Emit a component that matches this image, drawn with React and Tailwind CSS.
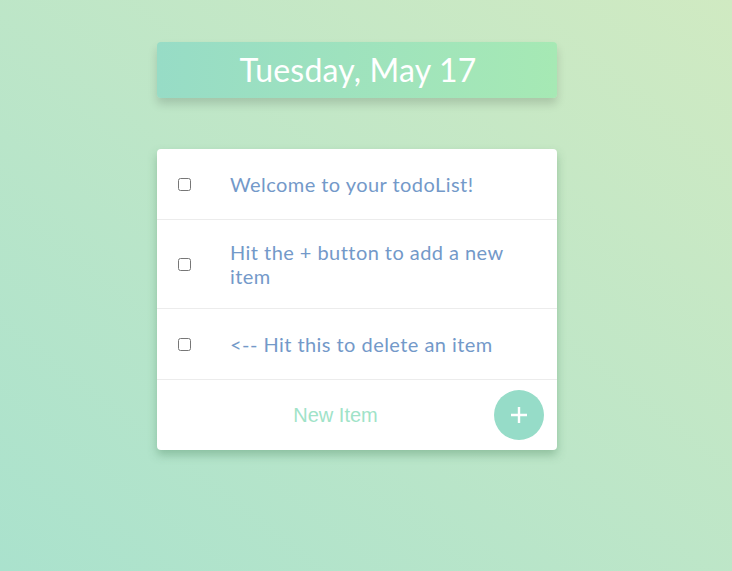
export default function App() {
  const items = [
    { text: "Welcome to your todoList!", h: "h-[71px]" },
    { text: "Hit the + button to add a new item", h: "h-[89px]" },
    { text: "<-- Hit this to delete an item", h: "h-[71px]" },
  ];
  return (
    <div className="min-h-screen w-full bg-linear-to-bl from-[#d0eac2] to-[#aae2cd] pt-[42px] pb-[60px]" style={{ fontFamily: "Lato, 'Noto Sans', sans-serif" }}>
      <div className="ml-[157px] w-[400px] h-[56px] rounded-[4px] bg-linear-to-r from-[#97dcc6] to-[#a6e9b4] shadow-[0_6px_10px_rgba(0,0,0,0.15)] flex items-center justify-center">
        <h1 className="text-white text-[32px] leading-none tracking-[0.2px] pl-[2px]">Tuesday, May 17</h1>
      </div>
      <div className="ml-[157px] mt-[51px] w-[400px] rounded-[4px] bg-white shadow-[0_5px_10px_rgba(60,120,80,0.35)] overflow-hidden">
        {items.map((it, i) => (
          <div key={i} className={`${it.h} flex items-center border-b border-[#ececec]`}>
            <div className="w-[73px] shrink-0 pl-[21px] flex items-center pt-[1px]">
              <input type="checkbox" className="w-[13px] h-[13px] m-0" />
            </div>
            <p className="w-[290px] text-[20px] leading-[24px] tracking-[0.45px] text-[#7399c9] pb-[1px]">{it.text}</p>
          </div>
        ))}
        <div className="h-[70px] flex items-center">
          <input
            type="text"
            placeholder="New Item"
            className="flex-1 min-w-0 pl-[20px] text-center text-[20px] outline-none placeholder:text-[#a0e3c8] bg-transparent"
            style={{ fontFamily: "'Liberation Sans', Arial, sans-serif" }}
          />
          <button className="w-[50px] h-[50px] mr-[13px] rounded-full bg-[#96dcc8] flex items-center justify-center shrink-0">
            <svg width="18" height="18" viewBox="0 0 18 18">
              <line x1="9" y1="1" x2="9" y2="17" stroke="white" strokeWidth="2.4" />
              <line x1="1" y1="9" x2="17" y2="9" stroke="white" strokeWidth="2.4" />
            </svg>
          </button>
        </div>
      </div>
    </div>
  );
}
